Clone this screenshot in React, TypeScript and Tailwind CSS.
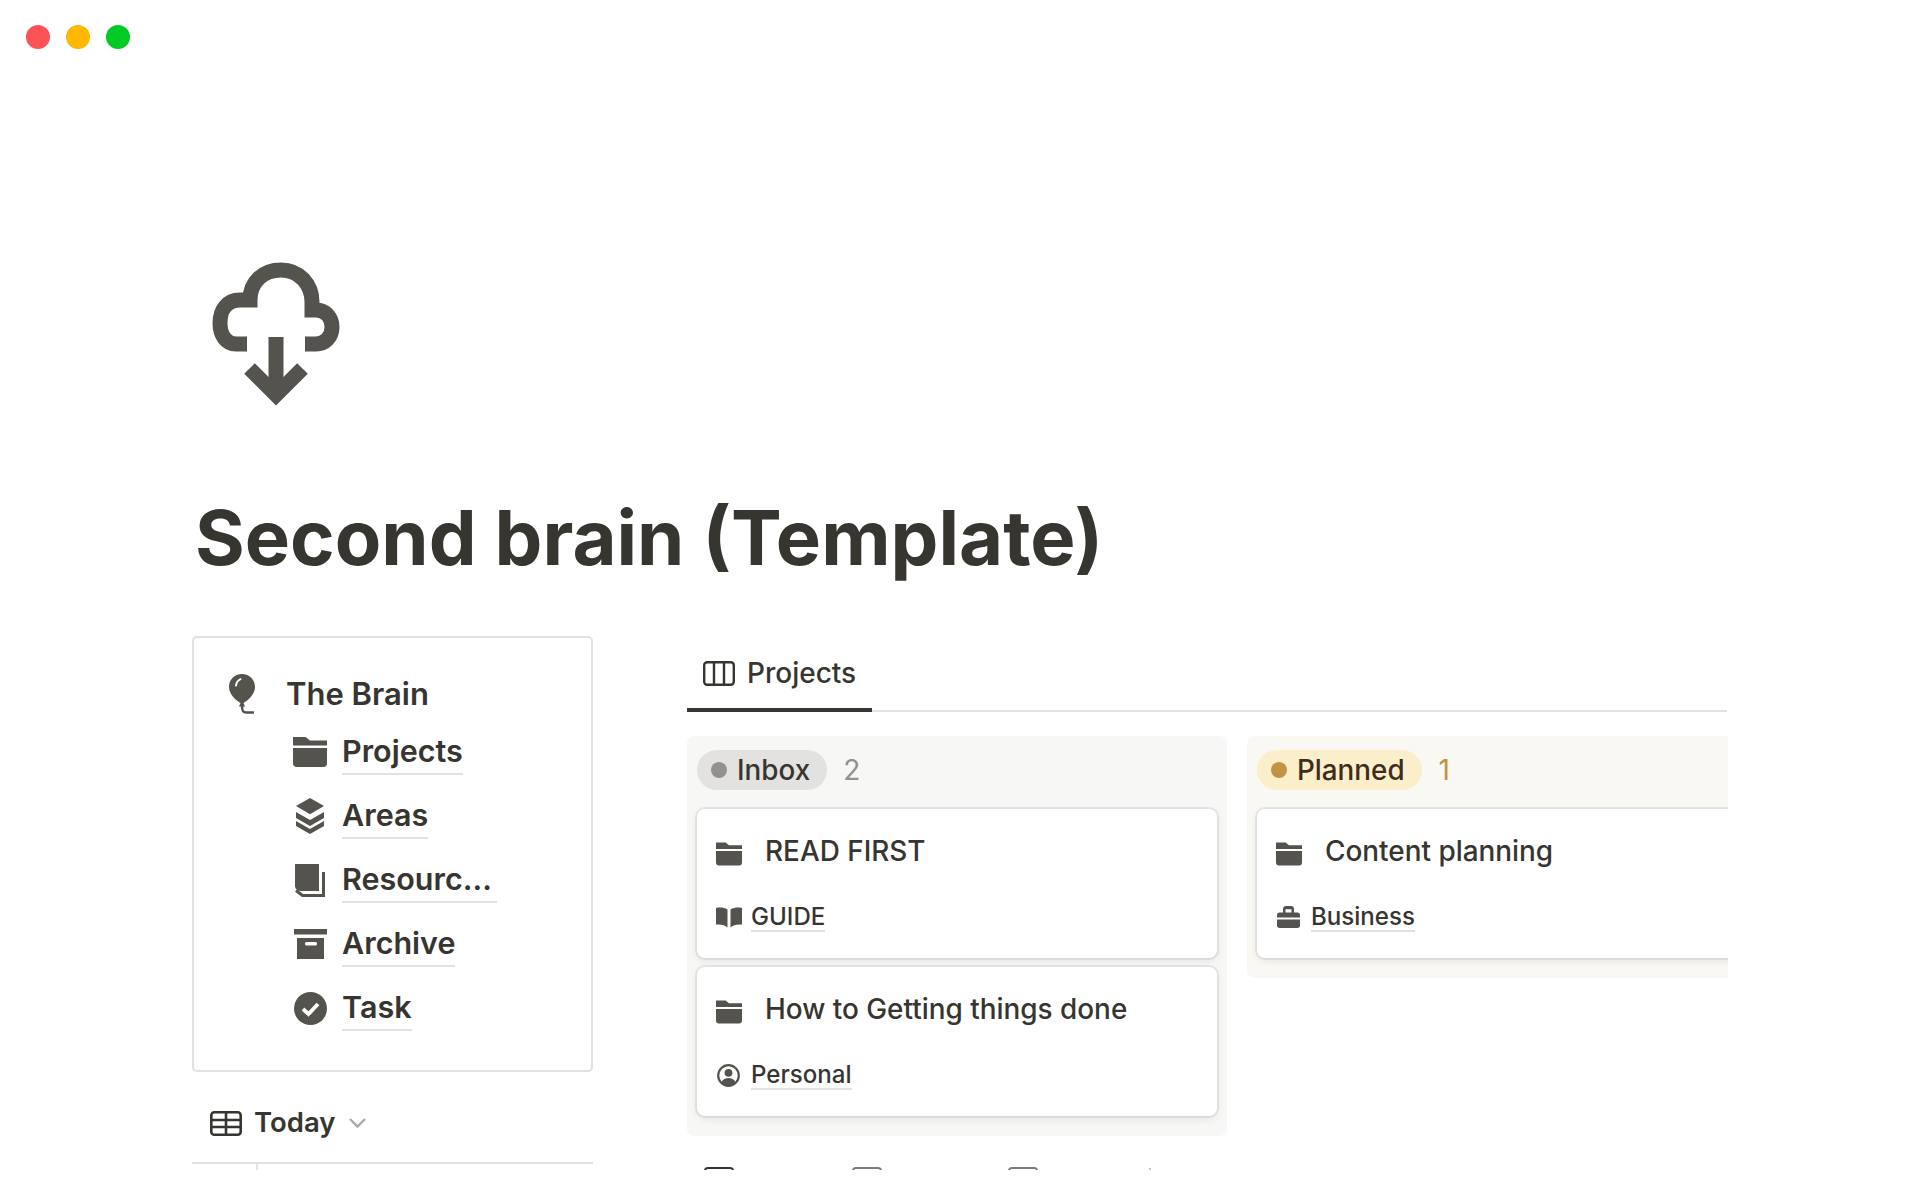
const iconGray = "#55534e";

const Folder = ({ className }: { className?: string }) => (
    <svg viewBox="0 0 34 30" className={className} fill={iconGray}>
        <path d="M0 0H12.6L17 3.5H34V8.5H0Z" />
        <path d="M0 11H34V26.5C34 28.5 32.5 30 30.5 30H3.5C1.5 30 0 28.5 0 26.5Z" />
    </svg>
);

const Stack = () => (
    <svg viewBox="0 0 28 36" className="h-[36px] w-[28px]" fill={iconGray}>
        <path d="M14 0L28 8L14 16.3L0 8Z" />
        <path d="M0 14L14 22L28 14V20L14 28L0 20Z" />
        <path d="M0 23L14 31L28 23V28L14 36L0 28Z" />
    </svg>
);

const Pages = () => (
    <svg viewBox="0 0 30 33" className="h-[33px] w-[30px]" fill={iconGray}>
        <path d="M0 0H24V27H6.5C3 27 0 25 0 22Z" />
        <path d="M28.5 8V31.5H7.5L1 26.5" fill="none" stroke={iconGray} strokeWidth="3" />
    </svg>
);

const ArchiveBox = () => (
    <svg viewBox="0 0 33 30" className="h-[30px] w-[33px]" fill={iconGray}>
        <path d="M0 0H33V5.5H0Z" />
        <path fillRule="evenodd" d="M3 9H30V30H3ZM12.5 13C11.5 13 11 13.8 11 14.8C11 15.8 11.5 16.6 12.5 16.6H21.5C22.5 16.6 23 15.8 23 14.8C23 13.8 22.5 13 21.5 13Z" />
    </svg>
);

const TaskCheck = () => (
    <svg viewBox="0 0 33 33" className="h-[33px] w-[33px]">
        <circle cx="16.5" cy="16.5" r="16.5" fill={iconGray} />
        <path d="M9 17L14.5 22L24 12" fill="none" stroke="#fff" strokeWidth="3.8" />
    </svg>
);

const Balloon = () => (
    <svg viewBox="0 0 26 40" className="h-[40px] w-[26px] shrink-0">
        <path fill={iconGray} d="M13 0C20.5 0 26 5.6 26 13C26 21 18 27 14.5 29L16 32.5H10L11.5 29C8 27 0 21 0 13C0 5.6 5.5 0 13 0Z" />
        <path d="M13 32C13 36 13.5 38.5 17 38.5H25" fill="none" stroke={iconGray} strokeWidth="2.6" />
        <path d="M7 11.5C7.5 8.5 9 6.3 11.5 5.2" fill="none" stroke="#fff" strokeWidth="2" strokeLinecap="round" />
    </svg>
);

const BookOpen = () => (
    <svg viewBox="0 0 26 21" className="h-[21px] w-[26px]" fill={iconGray}>
        <path d="M0 1C4 0 8 0.5 11.5 2.5V20.5C9 18 5 17 0 17.5Z" />
        <path d="M26 1C22 0 18 0.5 14.5 2.5V20.5C17 18 21 17 26 17.5Z" />
    </svg>
);

const PersonCircle = () => (
    <svg viewBox="0 0 23 23" className="ml-px h-[23px] w-[23px]">
        <circle cx="11.5" cy="11.5" r="10.3" fill="none" stroke={iconGray} strokeWidth="2.2" />
        <circle cx="11.5" cy="8.8" r="3.9" fill={iconGray} />
        <path d="M4.5 18.5C6 15 8.5 14 11.5 14C14.5 14 17 15 18.5 18.5C16.5 20.5 14 21.5 11.5 21.5C9 21.5 6.5 20.5 4.5 18.5Z" fill={iconGray} />
    </svg>
);

const Briefcase = () => (
    <svg viewBox="0 0 23 22" className="ml-px h-[22px] w-[23px]" fill={iconGray}>
        <path fillRule="evenodd" d="M6 7V3C6 1.2 7.2 0 9 0H14C15.8 0 17 1.2 17 3V7H14.5V3.2H8.5V7Z" />
        <path d="M2.5 6.5H20.5C22 6.5 23 7.5 23 9V11.5H0V9C0 7.5 1 6.5 2.5 6.5Z" />
        <path d="M0 13.5H23V19.5C23 21 22 22 20.5 22H2.5C1 22 0 21 0 19.5Z" />
    </svg>
);

const TableIcon = () => (
    <svg viewBox="0 0 32 25" className="h-[25px] w-[32px]" fill="none" stroke="#37352f" strokeWidth="2.6">
        <rect x="1.3" y="1.3" width="29.4" height="22.4" rx="3" />
        <path d="M1.3 9H30.7M1.3 16H30.7M16 1.3V23.7" />
    </svg>
);

const BoardIcon = () => (
    <svg viewBox="0 0 32 25" className="h-[25px] w-[32px]" fill="none" stroke="#37352f" strokeWidth="2.4">
        <rect x="1.2" y="1.2" width="29.6" height="22.6" rx="3" />
        <path d="M11 1.2V23.8M21 1.2V23.8" />
    </svg>
);

const CloudDown = () => (
    <svg viewBox="0 0 180 180" className="ml-[190px] mt-[191px] h-[180px] w-[180px]" fill="none" stroke={iconGray} strokeWidth="15">
        <path d="M57 104H46C36 104 30 95 30 83C30 70 37 60 50 60H60C60 42 73 30 91 30C109 30 122 44 122 62V70H126C136 70 142 78 142 87C142 97 135 104 126 104H115" />
        <path d="M86 97V150" />
        <path d="M59.5 128.5L86 155L112.5 128.5" />
    </svg>
);

const links = [
    { icon: <Folder className="h-[30px] w-[34px]" />, label: "Projects", pad: "" },
    { icon: <Stack />, label: "Areas", pad: "" },
    { icon: <Pages />, label: "Resourc...", pad: "pr-[5px]" },
    { icon: <ArchiveBox />, label: "Archive", pad: "" },
    { icon: <TaskCheck />, label: "Task", pad: "" },
];

const Card = ({ title, icon, tag }: { title: string; icon: React.ReactNode; tag: string }) => (
    <div className="h-[149px] w-full rounded-[8px] bg-white pl-[19px] pt-[22px] shadow-[0_0_0_2px_rgba(15,15,15,0.07),0_3px_8px_rgba(15,15,15,0.08)]">
        <div className="flex h-[40px] items-center">
            <Folder className="mt-[6px] h-[24px] w-[26px] shrink-0" />
            <span className="ml-[23px] text-[27.9px] font-medium leading-[40px] text-[#37352f]">{title}</span>
        </div>
        <div className="mt-[30px] flex h-[32px] items-center">
            <span className="flex w-[35px] shrink-0">{icon}</span>
            <span className="border-b-2 border-[#e3e2e0] text-[24.1px] font-medium leading-[27px] text-[#37352f]">{tag}</span>
        </div>
    </div>
);

const Pill = ({ label, pill, dot, text }: { label: string; pill: string; dot: string; text: string }) => (
    <span className={`flex h-[40px] items-center rounded-full pl-[14px] pr-[17px] ${pill}`}>
        <span className={`h-[16px] w-[16px] rounded-full ${dot}`} />
        <span className={`ml-[10px] text-[27.8px] font-medium leading-[40px] ${text}`}>{label}</span>
    </span>
);

export default function App() {
    return (
        <div className="h-[1170px] overflow-hidden bg-white font-[family-name:Inter,sans-serif] text-[#37352f]">
            <div className="flex gap-4 pl-[26px] pt-[25px]">
                <span className="h-[24px] w-[24px] rounded-full bg-[#ff5257]" />
                <span className="h-[24px] w-[24px] rounded-full bg-[#ffb700]" />
                <span className="h-[24px] w-[24px] rounded-full bg-[#00cb24]" />
            </div>
            <CloudDown />
            <h1 className="ml-[195px] mt-[67px] text-[76px] font-bold leading-[100px]">Second brain (Template)</h1>
            <div className="ml-[192px] mt-[49px] flex w-[1536px]">
                <div className="w-[401px] shrink-0">
                    <div className="h-[436px] rounded-[5px] border-2 border-[#e3e2e0] pl-[35px] pt-[36px]">
                        <div className="flex h-[40px] items-center">
                            <Balloon />
                            <span className="ml-[31px] text-[31px] font-semibold leading-[40px]">The Brain</span>
                        </div>
                        <div className="ml-[64px] mt-[6px]">
                            {links.map((link) => (
                                <div key={link.label} className="flex h-[64px] items-center">
                                    <span className="flex w-[34px] shrink-0 justify-center">{link.icon}</span>
                                    <span className={`ml-[15px] border-b-2 border-[#e3e2e0] text-[30.5px] font-semibold leading-[44px] ${link.pad}`}>{link.label}</span>
                                </div>
                            ))}
                        </div>
                    </div>
                    <div className="flex h-[92px] items-center border-b-2 border-[#e3e2e0] pl-[18px] pt-[12px]">
                        <TableIcon />
                        <span className="ml-[12px] text-[27.5px] font-semibold">Today</span>
                        <svg viewBox="0 0 17 10" className="ml-[14px] h-[10px] w-[17px]" fill="none" stroke="#acaba9" strokeWidth="2.4">
                            <path d="M1 1L8.5 8.5L16 1" />
                        </svg>
                    </div>
                    <div className="ml-[64px] h-[10px] w-[2px] bg-[#e3e2e0]" />
                </div>
                <div className="ml-[94px] w-[1041px] shrink-0">
                    <div className="mr-px flex h-[76px] border-b-2 border-[#e3e2e0]">
                        <div className="-mb-[2px] flex h-[76px] w-[185px] items-center gap-[12px] border-b-4 border-[#37352f] pl-[16px] pt-[2px]">
                            <BoardIcon />
                            <span className="text-[28px] font-medium leading-[40px]">Projects</span>
                        </div>
                    </div>
                    <div className="mt-[24px] flex gap-[20px] overflow-hidden">
                        <div className="h-[400px] w-[540px] shrink-0 rounded-[8px] bg-[#f7f7f5] px-[10px] pt-[14px]">
                            <div className="flex items-center">
                                <Pill label="Inbox" pill="bg-[#e3e2e0]" dot="bg-[#91918e]" text="text-[#37352f]" />
                                <span className="ml-[16px] text-[28px] leading-[40px] text-[#91918e]">2</span>
                            </div>
                            <div className="mt-[19px] flex flex-col gap-[9px]">
                                <Card title="READ FIRST" icon={<BookOpen />} tag="GUIDE" />
                                <Card title="How to Getting things done" icon={<PersonCircle />} tag="Personal" />
                            </div>
                        </div>
                        <div className="h-[242px] w-[540px] shrink-0 rounded-[8px] bg-[#faf8f3] px-[10px] pt-[14px]">
                            <div className="flex items-center">
                                <Pill label="Planned" pill="bg-[#fbeeca]" dot="bg-[#c29343]" text="text-[#402c1b]" />
                                <span className="ml-[17px] text-[28px] leading-[40px] text-[#c29343]">1</span>
                            </div>
                            <div className="mt-[19px]">
                                <Card title="Content planning" icon={<Briefcase />} tag="Business" />
                            </div>
                        </div>
                    </div>
                    <div className="mt-[31px] flex pl-[17px]">
                        <div className="h-[24px] w-[30px] rounded-[4px] border-2 border-[#37352f]" />
                        <div className="ml-[118px] h-[24px] w-[30px] rounded-[4px] border-2 border-[#7d7c78]" />
                        <div className="ml-[126px] h-[24px] w-[30px] rounded-[4px] border-2 border-[#7d7c78]" />
                        <div className="ml-[111px] mt-[1px] h-[2px] w-[2px] rounded-full bg-[#b5b4b1]" />
                    </div>
                </div>
            </div>
        </div>
    );
}
